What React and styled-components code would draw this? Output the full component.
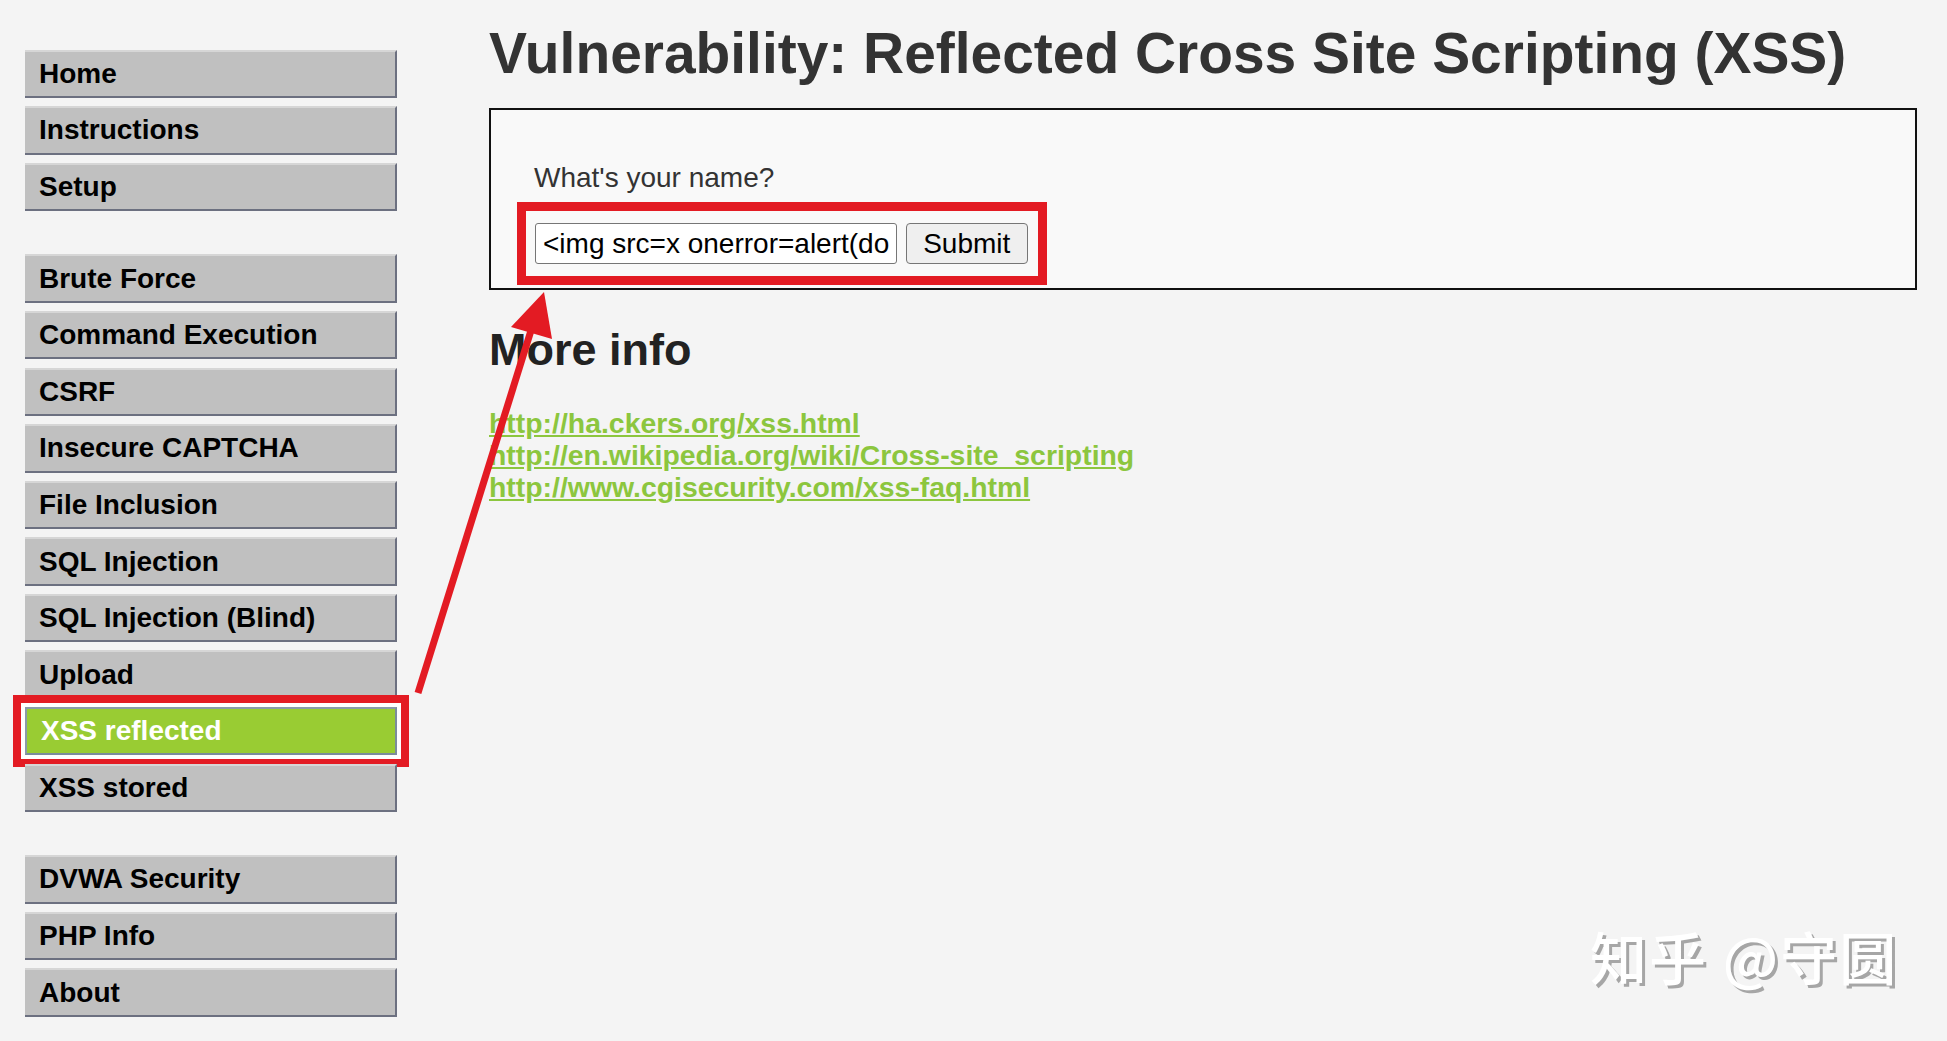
import styled, { createGlobalStyle } from "styled-components";

const GlobalStyle = createGlobalStyle`
    html, body {
        margin: 0;
        padding: 0;
        background: #f4f4f4;
        font-family: "Liberation Sans", Arial, sans-serif;
        color: #333;
    }
`;

const Page = styled.div`
    position: relative;
    display: flex;
    align-items: flex-start;
    min-height: 1041px;
    padding-left: 25px;
    box-sizing: border-box;
    overflow: hidden;
`;

const Menu = styled.div`
    width: 372px;
    margin-top: 49.7px;
    display: flex;
    flex-direction: column;
    gap: 43.2px;
`;

const MenuGroup = styled.ul`
    list-style: none;
    margin: 0;
    padding: 0;
    display: flex;
    flex-direction: column;
    gap: 8.2px;
`;

const MenuItem = styled.li`
    height: 48.4px;
    box-sizing: border-box;
    display: flex;
    align-items: center;
    padding-left: 14px;
    font-weight: bold;
    font-size: 28px;
    background: ${(p) => (p.$selected ? "#99cc33" : "#c0c0c0")};
    color: ${(p) => (p.$selected ? "#fff" : "#000")};
    border-top: 2px solid ${(p) => (p.$selected ? "#8a9aa8" : "#d6d6d6")};
    border-left: ${(p) => (p.$selected ? "2px solid #8a9aa8" : "none")};
    border-right: 2px solid ${(p) => (p.$selected ? "#7c8c9c" : "#6c7080")};
    border-bottom: 2px solid ${(p) => (p.$selected ? "#7c8c9c" : "#6c7080")};
    ${(p) =>
        p.$selected &&
        `
        box-shadow: 0 0 0 4px #fff;
        outline: 8.5px solid #e31b23;
        outline-offset: 4px;
    `}
`;

const Main = styled.div`
    flex: 1;
    margin-left: 92px;
    margin-right: 30px;
`;

const Title = styled.h1`
    margin: 20px 0 0;
    font-size: 56.9px;
    line-height: 66px;
    font-weight: bold;
    color: #333;
`;

const FormBox = styled.div`
    margin-top: 22px;
    border: 2px solid #111;
    background: #f9f9f9;
    padding: 52px 0 12px 43px;
`;

const Prompt = styled.p`
    margin: 0 0 17px;
    font-size: 28px;
    line-height: 32px;
    color: #333;
`;

const FormRow = styled.div`
    display: inline-flex;
    gap: 9.5px;
    padding: 12px 10px 12px 9.5px;
    margin-left: -8.5px;
    outline: 9px solid #e31b23;
`;

const TextInput = styled.input`
    width: 361.5px;
    height: 41px;
    box-sizing: border-box;
    padding: 0 7px;
    border: 1px solid #767676;
    border-radius: 3px;
    background: #fff;
    font-family: "Liberation Sans", Arial, sans-serif;
    font-size: 28px;
    color: #000;
`;

const SubmitButton = styled.button`
    width: 121.5px;
    height: 41px;
    padding: 0;
    border: 1px solid #767676;
    border-radius: 4px;
    background: #efefef;
    font-family: "Liberation Sans", Arial, sans-serif;
    font-size: 28px;
    color: #000;
`;

const SubHeading = styled.h2`
    margin: 34px 0 0;
    font-size: 45px;
    line-height: 52px;
    font-weight: bold;
    color: #222;
`;

const LinkList = styled.ul`
    list-style: none;
    margin: 31px 0 0;
    padding: 0;
`;

const LinkItem = styled.li`
    font-size: 28.4px;
    line-height: 32px;
    font-weight: bold;

    a {
        color: #8cc63e;
        text-decoration: underline;
    }
`;

const Arrow = styled.svg`
    position: absolute;
    left: 0;
    top: 0;
    pointer-events: none;
`;

const Watermark = styled.div`
    position: absolute;
    left: 1590px;
    top: 914px;
    font-family: "Noto Sans CJK SC", sans-serif;
    font-size: 57px;
    font-weight: 500;
    color: #fff;
    text-shadow: 3px 3px 0 #a6a6a6;
    letter-spacing: 2px;
`;

const menuGroups = [
    ["Home", "Instructions", "Setup"],
    [
        "Brute Force",
        "Command Execution",
        "CSRF",
        "Insecure CAPTCHA",
        "File Inclusion",
        "SQL Injection",
        "SQL Injection (Blind)",
        "Upload",
        "XSS reflected",
        "XSS stored",
    ],
    ["DVWA Security", "PHP Info", "About"],
];

const links = [
    "http://ha.ckers.org/xss.html",
    "http://en.wikipedia.org/wiki/Cross-site_scripting",
    "http://www.cgisecurity.com/xss-faq.html",
];

const App = () => (
    <>
        <GlobalStyle />
        <Page>
            <Menu>
                {menuGroups.map((group, i) => (
                    <MenuGroup key={i}>
                        {group.map((label) => (
                            <MenuItem key={label} $selected={label === "XSS reflected"}>
                                {label}
                            </MenuItem>
                        ))}
                    </MenuGroup>
                ))}
            </Menu>
            <Main>
                <Title>Vulnerability: Reflected Cross Site Scripting (XSS)</Title>
                <FormBox>
                    <Prompt>What's your name?</Prompt>
                    <FormRow>
                        <TextInput defaultValue="<img src=x onerror=alert(document.cookie)>" />
                        <SubmitButton>Submit</SubmitButton>
                    </FormRow>
                </FormBox>
                <SubHeading>More info</SubHeading>
                <LinkList>
                    {links.map((href) => (
                        <LinkItem key={href}>
                            <a href={href}>{href}</a>
                        </LinkItem>
                    ))}
                </LinkList>
            </Main>
            <Arrow width="1947" height="1041" viewBox="0 0 1947 1041">
                <line x1="418" y1="693" x2="533" y2="324" stroke="#e31b23" strokeWidth="7" />
                <polygon points="544,292 511,327 552,339" fill="#e31b23" />
            </Arrow>
            <Watermark>知乎 @守圆</Watermark>
        </Page>
    </>
);

export default App;
